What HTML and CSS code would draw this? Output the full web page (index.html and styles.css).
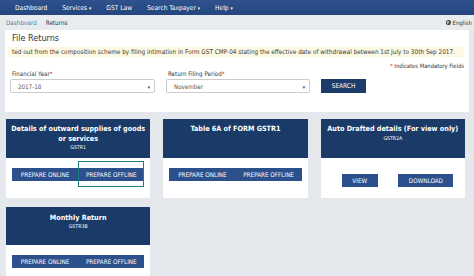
FILE: index.html
```html
<!DOCTYPE html>
<html lang="en">
<head>
    <meta charset="UTF-8">
    <meta name="viewport" content="width=device-width, initial-scale=1.0">
    <title>File Returns</title>
    <link rel="stylesheet" href="styles.css">
</head>
<body>
    <nav class="topnav">
        <a href="#">Dashboard</a>
        <a href="#">Services <span class="caret">&#9662;</span></a>
        <a href="#">GST Law</a>
        <a href="#">Search Taxpayer <span class="caret">&#9662;</span></a>
        <a href="#">Help <span class="caret">&#9662;</span></a>
    </nav>

    <div class="crumbs">
        <div class="crumb-links">
            <a href="#">Dashboard</a>
            <span>Returns</span>
        </div>
        <div class="lang">
            <svg class="globe" viewBox="0 0 10 10" width="5" height="5">
                <circle cx="5" cy="5" r="5" fill="#333"/>
                <path d="M2 3 L5 2 L6 4 L4 6 L5 8 L3 8 Z M7 5 L9 5 L8 8 Z" fill="#fff"/>
            </svg>
            English
        </div>
    </div>

    <div class="page">
        <section class="panel">
            <h1>File Returns</h1>
            <div class="notice">ted out from the composition scheme by filing intimation in Form GST CMP-04 stating the effective date of withdrawal between 1st July to 30th Sep 2017.</div>
            <p class="mandatory"><span class="req">*</span> Indicates Mandatory Fields</p>

            <form class="filters">
                <div class="field">
                    <label>Financial Year<span class="req">*</span></label>
                    <div class="select">2017-18</div>
                </div>
                <div class="field">
                    <label>Return Filing Period<span class="req">*</span></label>
                    <div class="select">November</div>
                </div>
                <button type="button" class="btn-search">SEARCH</button>
            </form>
        </section>

        <div class="cards">
            <div class="card">
                <div class="card-head">
                    <h2>Details of outward supplies of goods or services</h2>
                    <small>GSTR1</small>
                </div>
                <div class="card-body">
                    <div class="btn-pair">
                        <button type="button">PREPARE ONLINE</button>
                        <button type="button" class="marked">PREPARE OFFLINE</button>
                    </div>
                </div>
            </div>

            <div class="card">
                <div class="card-head">
                    <h2>Table 6A of FORM GSTR1</h2>
                </div>
                <div class="card-body">
                    <div class="btn-pair">
                        <button type="button">PREPARE ONLINE</button>
                        <button type="button">PREPARE OFFLINE</button>
                    </div>
                </div>
            </div>

            <div class="card">
                <div class="card-head">
                    <h2>Auto Drafted details (For view only)</h2>
                    <small>GSTR2A</small>
                </div>
                <div class="card-body">
                    <div class="btn-split">
                        <div class="slot"><button type="button" class="btn-view">VIEW</button></div>
                        <div class="slot"><button type="button" class="btn-download">DOWNLOAD</button></div>
                    </div>
                </div>
            </div>

            <div class="card card-low">
                <div class="card-head">
                    <h2>Monthly Return</h2>
                    <small>GSTR3B</small>
                </div>
                <div class="card-body">
                    <div class="btn-pair">
                        <button type="button">PREPARE ONLINE</button>
                        <button type="button">PREPARE OFFLINE</button>
                    </div>
                </div>
            </div>
        </div>
    </div>
</body>
</html>
```

FILE: styles.css
```css
body {
    margin: 0;
    background: #e4e7eb;
    font-family: "DejaVu Sans Condensed", "DejaVu Sans", sans-serif;
    color: #333;
    overflow: hidden;
}
a {
    text-decoration: none;
}

/* top navigation */
.topnav {
    height: 15px;
    display: flex;
    align-items: center;
    gap: 15px;
    padding-left: 15px;
    background: linear-gradient(#2f528e, #24457d);
}
.topnav a {
    color: #fff;
    font-size: 6.6px;
}
.caret {
    font-size: 5px;
}

/* breadcrumb bar */
.crumbs {
    height: 15px;
    display: flex;
    align-items: center;
    justify-content: space-between;
    padding: 0 2px 0 6px;
    background: #e9ecef;
    font-size: 6.3px;
}
.crumb-links {
    display: flex;
    gap: 9px;
}
.crumb-links a {
    color: #5b79a6;
}
.lang {
    display: flex;
    align-items: center;
    gap: 2px;
    font-size: 6px;
}

/* file returns panel */
.page {
    padding: 0 5px;
}
.panel {
    background: #fff;
    padding: 2px 5px 19px 7px;
}
h1 {
    margin: 0;
    font-size: 9px;
    line-height: 12px;
    font-weight: normal;
}
.notice {
    margin: 3px 0 0 -4px;
    padding-left: 4px;
    height: 10px;
    line-height: 10px;
    background: #fcf8e3;
    color: #3a3a3a;
    font-size: 6.4px;
    white-space: nowrap;
    overflow: hidden;
}
.mandatory {
    margin: 5px 0 0;
    line-height: 8px;
    font-size: 5.8px;
    text-align: right;
}
.req {
    color: #d0021b;
}
.filters {
    display: grid;
    grid-template-columns: 145px 144px 45px;
    column-gap: 11px;
    align-items: end;
    margin-left: -2px;
}
.field label {
    display: block;
    padding-left: 2px;
    margin-bottom: 1px;
    line-height: 8px;
    font-size: 6.2px;
}
.select {
    position: relative;
    height: 14px;
    line-height: 14px;
    box-sizing: border-box;
    border: 1px solid #ccc;
    border-radius: 2px;
    padding-left: 7px;
    font-size: 6.2px;
    color: #555;
}
.select::after {
    content: "\25BE";
    position: absolute;
    right: 4px;
    top: 0;
    font-size: 5px;
    color: #333;
}
.btn-search {
    height: 14px;
    padding: 0;
    border: none;
    background: #1c3c6c;
    color: #fff;
    font-family: inherit;
    font-size: 6.5px;
}

/* return cards */
.cards {
    display: grid;
    grid-template-columns: repeat(3, 1fr);
    column-gap: 13px;
    row-gap: 9px;
    padding: 7px 4px 0 1px;
}
.card {
    background: #fff;
    height: 79px;
}
.card-head {
    height: 39px;
    box-sizing: border-box;
    padding: 5px 5px 0;
    background: #1a3a68;
    color: #fff;
    text-align: center;
}
.card-head h2 {
    margin: 0;
    font-size: 7.2px;
    line-height: 9.5px;
    font-weight: bold;
}
.card-head small {
    display: block;
    font-size: 5.2px;
    line-height: 8px;
}
.card-low {
    height: 70px;
}
.card-low .card-head {
    height: 38px;
    padding-top: 6px;
}
.card-low .card-head small {
    line-height: 6px;
}
.card-body {
    padding: 10px 6px 0;
}
.card-body button {
    height: 13px;
    padding: 0;
    border: none;
    background: #2c508c;
    color: #fff;
    font-family: inherit;
    font-size: 6.3px;
}
.btn-pair {
    display: flex;
}
.btn-pair button {
    flex: 1;
}
.btn-split {
    display: flex;
}
.btn-split .slot {
    flex: 1;
    text-align: center;
}
.btn-view {
    width: 36px;
}
.btn-download {
    width: 55px;
}

/* highlight frame drawn over one button */
.marked {
    position: relative;
}
.marked::after {
    content: "";
    position: absolute;
    top: -7px;
    bottom: -6px;
    left: 0;
    right: 0;
    border: 1.5px solid #1f8080;
}
```
